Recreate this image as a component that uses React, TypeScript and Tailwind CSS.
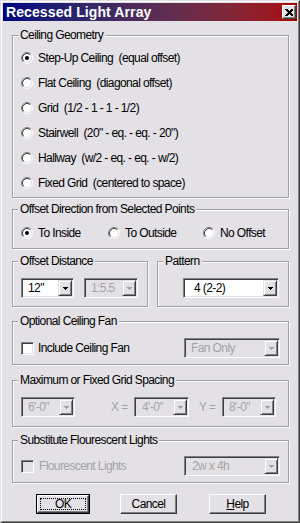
import React from 'react';

const Radio: React.FC<{ checked?: boolean }> = ({ checked }) => (
  <svg width="12" height="12" viewBox="0 0 12 12" className="shrink-0">
    <circle cx="6" cy="6" r="4.5" fill="#fff" />
    <path d="M2.11 9.89 A5.5 5.5 0 0 1 9.89 2.11" stroke="#808080" fill="none" />
    <path d="M9.89 2.11 A5.5 5.5 0 0 1 2.11 9.89" stroke="#fff" fill="none" />
    <path d="M2.82 9.18 A4.5 4.5 0 0 1 9.18 2.82" stroke="#404040" fill="none" />
    <path d="M9.18 2.82 A4.5 4.5 0 0 1 2.82 9.18" stroke="#e3e1e5" fill="none" />
    {checked && <circle cx="6" cy="6" r="2" fill="#000" />}
  </svg>
);

const Check: React.FC<{ disabled?: boolean }> = ({ disabled }) => (
  <span
    className={`block w-[13px] h-[13px] shrink-0 border border-t-[#808080] border-l-[#808080] border-b-white border-r-white shadow-[inset_1px_1px_0_#404040,inset_-1px_-1px_0_#e3e1e5] ${
      disabled ? 'bg-[#e3e1e5]' : 'bg-white'
    }`}
  />
);

const Combo: React.FC<{ value: string; disabled?: boolean; className?: string; textPad?: string }> = ({
  value,
  disabled,
  className = '',
  textPad = 'pl-[4px]',
}) => (
  <div
    className={`flex h-[20px] p-px border border-t-[#808080] border-l-[#808080] border-b-white border-r-white shadow-[inset_1px_1px_0_#404040,inset_-1px_-1px_0_#e3e1e5] ${
      disabled ? 'bg-[#e3e1e5] text-[#a4a4a4]' : 'bg-white text-black'
    } ${className}`}
  >
    <div className={`flex-1 flex items-center whitespace-pre leading-none ${textPad}`}>{value}</div>
    <div className="w-[14px] h-full flex items-center justify-center bg-[#e3e1e5] border border-t-[#e3e1e5] border-l-[#e3e1e5] border-b-[#404040] border-r-[#404040] shadow-[inset_1px_1px_0_#fff,inset_-1px_-1px_0_#808080]">
      <svg width="5" height="3" viewBox="0 0 5 3" shapeRendering="crispEdges">
        <path d="M0 0h5L2.5 3z" fill={disabled ? '#a0a0a0' : '#000'} />
      </svg>
    </div>
  </div>
);

const Group: React.FC<{ title: string; className?: string; children: React.ReactNode }> = ({
  title,
  className = '',
  children,
}) => (
  <div className={`border border-[#a0a0a0] shadow-[inset_1px_1px_0_#fff,1px_1px_0_#fff] ${className}`}>
    <div className="-mt-[8px] ml-[5px] w-fit h-[15px] leading-[15px] px-[2px] bg-[#e3e1e5] whitespace-pre">{title}</div>
    {children}
  </div>
);

const geometry = [
  { label: 'Step-Up Ceiling  (equal offset)', checked: true },
  { label: 'Flat Ceiling  (diagonal offset)' },
  { label: 'Grid  (1/2 - 1 - 1 - 1/2)' },
  { label: 'Stairwell  (20" - eq. - eq. - 20")' },
  { label: 'Hallway  (w/2 - eq. - eq. - w/2)' },
  { label: 'Fixed Grid  (centered to space)' },
];

const Button: React.FC<{ children: React.ReactNode; className?: string; isDefault?: boolean }> = ({
  children,
  className = '',
  isDefault,
}) =>
  isDefault ? (
    <div className={`h-[20px] border border-black ${className}`}>
      <div className="h-full p-[2px] bg-[#e3e1e5] border border-t-white border-l-white border-b-[#404040] border-r-[#404040] shadow-[inset_-1px_-1px_0_#808080]">
        <div className="h-full flex items-center justify-center border border-dotted border-black leading-none">
          {children}
        </div>
      </div>
    </div>
  ) : (
    <div
      className={`h-[20px] flex items-center justify-center leading-none bg-[#e3e1e5] border border-t-white border-l-white border-b-[#404040] border-r-[#404040] shadow-[inset_-1px_-1px_0_#808080] ${className}`}
    >
      {children}
    </div>
  );

export default function App() {
  return (
    <div className="w-[300px] h-[523px] bg-[#e3e1e5] text-black text-[12px] tracking-[-0.6px] font-['Liberation_Sans',Arial,sans-serif] border border-t-[#e3e1e5] border-l-[#e3e1e5] border-b-[#404040] border-r-[#404040]">
      <div className="h-full p-px border border-t-white border-l-white border-b-[#808080] border-r-[#808080]">
        {/* Title bar */}
        <div className="h-[18px] flex items-center pl-[3px] pr-px bg-linear-to-r from-[#000080] to-[#a80000]">
          <span className="flex-1 text-white font-bold text-[14px] tracking-[0.1px] leading-none">
            Recessed Light Array
          </span>
          <div className="w-[14px] h-[14px] flex items-center justify-center bg-[#e3e1e5] border border-t-white border-l-white border-b-[#404040] border-r-[#404040] shadow-[inset_-1px_-1px_0_#808080]">
            <svg width="8" height="7" viewBox="0 0 8 7" shapeRendering="crispEdges">
              <path d="M0 0h2l2 2 2-2h2v1L5.5 3.5 8 6v1H6L4 5 2 7H0V6l2.5-2.5L0 1z" fill="#000" />
            </svg>
          </div>
        </div>

        <div className="pl-[9px] pr-[8px]">
          {/* Ceiling Geometry */}
          <Group title="Ceiling Geometry" className="mt-[14px] h-[163px]">
            <div className="mt-[2px]">
              {geometry.map((g) => (
                <div key={g.label} className="h-[25px] flex items-center pl-[8px] gap-[5px] whitespace-pre">
                  <Radio checked={g.checked} />
                  <span>{g.label}</span>
                </div>
              ))}
            </div>
          </Group>

          {/* Offset Direction */}
          <Group title="Offset Direction from Selected Points" className="mt-[11px] h-[40px]">
            <div className="mt-[6px] h-[20px] flex items-center pl-[8px]">
              <div className="w-[87px] flex items-center gap-[5px]">
                <Radio checked />
                <span>To Inside</span>
              </div>
              <div className="w-[95px] flex items-center gap-[5px]">
                <Radio />
                <span>To Outside</span>
              </div>
              <div className="flex items-center gap-[5px]">
                <Radio />
                <span>No Offset</span>
              </div>
            </div>
          </Group>

          {/* Offset Distance / Pattern */}
          <div className="mt-[12px] flex gap-[9px]">
            <Group title="Offset Distance" className="w-[136px] h-[46px]">
              <div className="mt-[9px] flex pl-[8px] gap-[10px]">
                <Combo value={'12"'} className="w-[53px]" textPad="pl-[5px]" />
                <Combo value="1:5.5" disabled className="w-[54px]" textPad="pl-[5px]" />
              </div>
            </Group>
            <Group title="Pattern" className="w-[132px] h-[46px]">
              <div className="mt-[9px] flex pl-[25px]">
                <Combo value="4 (2-2)" className="w-[96px]" textPad="pl-[9px]" />
              </div>
            </Group>
          </div>

          {/* Optional Ceiling Fan */}
          <Group title="Optional Ceiling Fan" className="mt-[14px] h-[44px]">
            <div className="mt-[9px] h-[20px] flex items-center pl-[8px] pr-[8px]">
              <Check />
              <span className="ml-[4px] flex-1">Include Ceiling Fan</span>
              <Combo value="Fan Only" disabled className="w-[96px]" textPad="pl-[5px]" />
            </div>
          </Group>

          {/* Maximum or Fixed Grid Spacing */}
          <Group title="Maximum or Fixed Grid Spacing" className="mt-[15px] h-[47px]">
            <div className="mt-[9px] h-[20px] flex items-center pl-[8px] text-[#a4a4a4]">
              <Combo value={`6'-0"`} disabled className="w-[54px]" textPad="pl-[5px]" />
              <span className="ml-[36px] w-[23px] whitespace-pre">X =</span>
              <Combo value={`4'-0"`} disabled className="w-[55px]" textPad="pl-[6px]" />
              <span className="ml-[10px] w-[23px] whitespace-pre">Y =</span>
              <Combo value={`8'-0"`} disabled className="w-[54px]" textPad="pl-[5px]" />
            </div>
          </Group>

          {/* Substitute Flourescent Lights */}
          <Group title="Substitute Flourescent Lights" className="mt-[13px] h-[43px]">
            <div className="mt-[8px] h-[20px] flex items-center pl-[8px] pr-[8px]">
              <Check disabled />
              <span className="ml-[5px] flex-1 text-[#a4a4a4]">Flourescent Lights</span>
              <Combo value="2w x 4h" disabled className="w-[96px]" textPad="pl-[6px]" />
            </div>
          </Group>

          {/* Buttons */}
          <div className="mt-[11px] flex">
            <Button isDefault className="ml-[24px] w-[54px]">
              OK
            </Button>
            <Button className="ml-[30px] w-[57px]">Cancel</Button>
            <Button className="ml-[32px] w-[57px]">
              <span>
                <span className="underline">H</span>elp
              </span>
            </Button>
          </div>
        </div>
      </div>
    </div>
  );
}
